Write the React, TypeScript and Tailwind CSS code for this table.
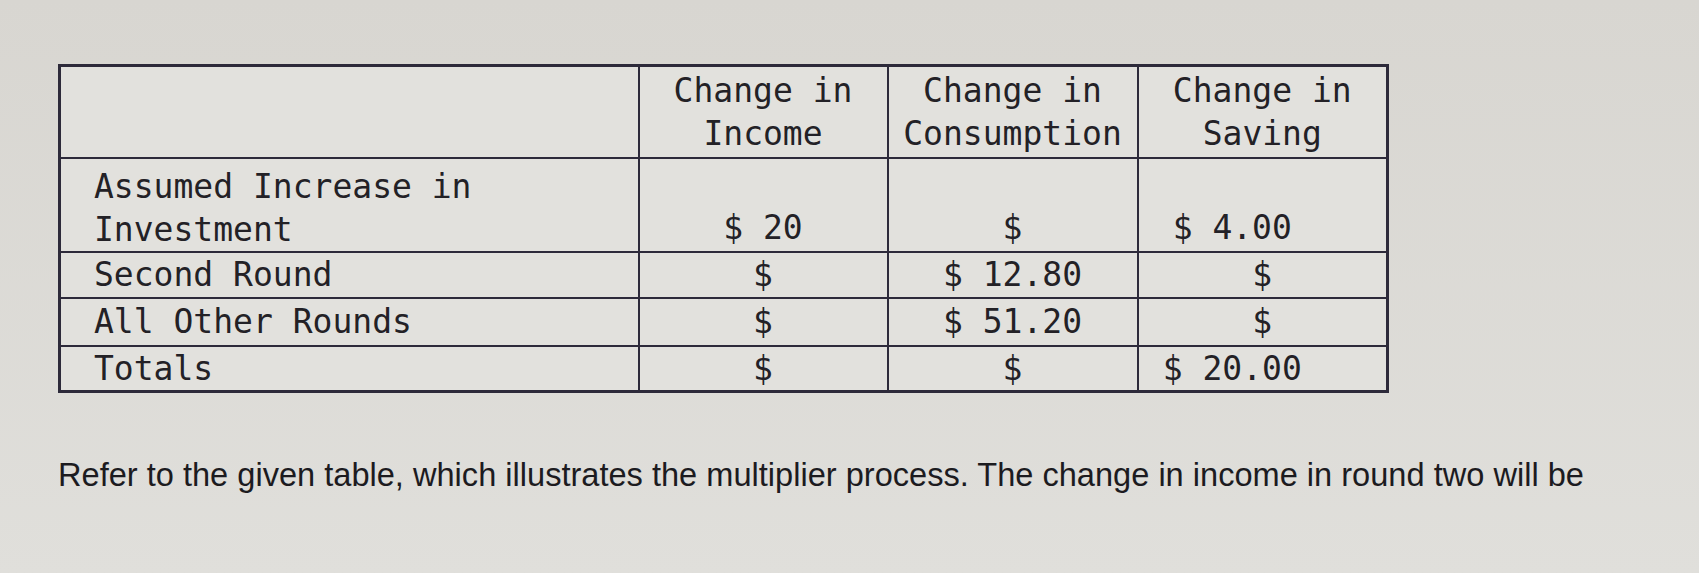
import React from "react";

const mono = { fontFamily: '"DejaVu Sans Mono", "Liberation Mono", monospace' };

type Row = {
  label: string[];
  values: string[];
  height: string;
};

const rows: Row[] = [
  { label: ["Assumed Increase in", "Investment"], values: ["$ 20", "$", "$ 4.00"], height: "h-[94px]" },
  { label: ["Second Round"], values: ["$", "$ 12.80", "$"], height: "h-[46px]" },
  { label: ["All Other Rounds"], values: ["$", "$ 51.20", "$"], height: "h-[48px]" },
  { label: ["Totals"], values: ["$", "$", "$ 20.00"], height: "h-[46px]" },
];

const headers = [
  ["Change in", "Income"],
  ["Change in", "Consumption"],
  ["Change in", "Saving"],
];

const App: React.FC = () => {
  return (
    <div className="w-[1699px] h-[573px] overflow-hidden bg-gradient-to-b from-[#d8d6d1] to-[#e0dfdb] pt-[64px] pl-[58px]">
      {/* Table */}
      <table
        style={mono}
        className="border-collapse border-[3px] border-[#2d2a3a] text-[33px] leading-[43px] text-[#232126]"
      >
        <thead>
          <tr className="h-[92px]">
            <th className="w-[579px] border-2 border-[#2d2a3a] bg-[#e2e1dd]"></th>
            {headers.map((h, i) => (
              <th
                key={i}
                className={`${i === 0 ? "w-[249px]" : "w-[250px]"} border-2 border-[#2d2a3a] bg-[#e2e1dd] font-normal text-center align-middle`}
              >
                {h[0]}
                <br />
                {h[1]}
              </th>
            ))}
          </tr>
        </thead>
        <tbody>
          {rows.map((r, ri) => (
            <tr key={ri} className={r.height}>
              <td
                className={`border-2 border-[#2d2a3a] bg-[#e2e1dd] pl-[33px] ${ri === 0 ? "align-top pt-[6px]" : "align-middle"}`}
              >
                {r.label.map((l, li) => (
                  <div key={li}>{l}</div>
                ))}
              </td>
              {r.values.map((v, vi) => (
                <td
                  key={vi}
                  className={`border-2 border-[#2d2a3a] bg-[#e2e1dd] text-center ${ri === 0 ? "align-bottom pb-[2px]" : "align-middle"} ${vi === 2 && v !== "$" ? "pr-[60px]" : ""}`}
                >
                  {v}
                </td>
              ))}
            </tr>
          ))}
        </tbody>
      </table>

      {/* Question */}
      <p
        className="mt-[62px] text-[32.6px] leading-[40px] text-[#1c1b1f] whitespace-nowrap"
        style={{ fontFamily: '"Liberation Sans", Arial, sans-serif' }}
      >
        Refer to the given table, which illustrates the multiplier process. The change in income in round two will be
      </p>
    </div>
  );
};

export default App;
